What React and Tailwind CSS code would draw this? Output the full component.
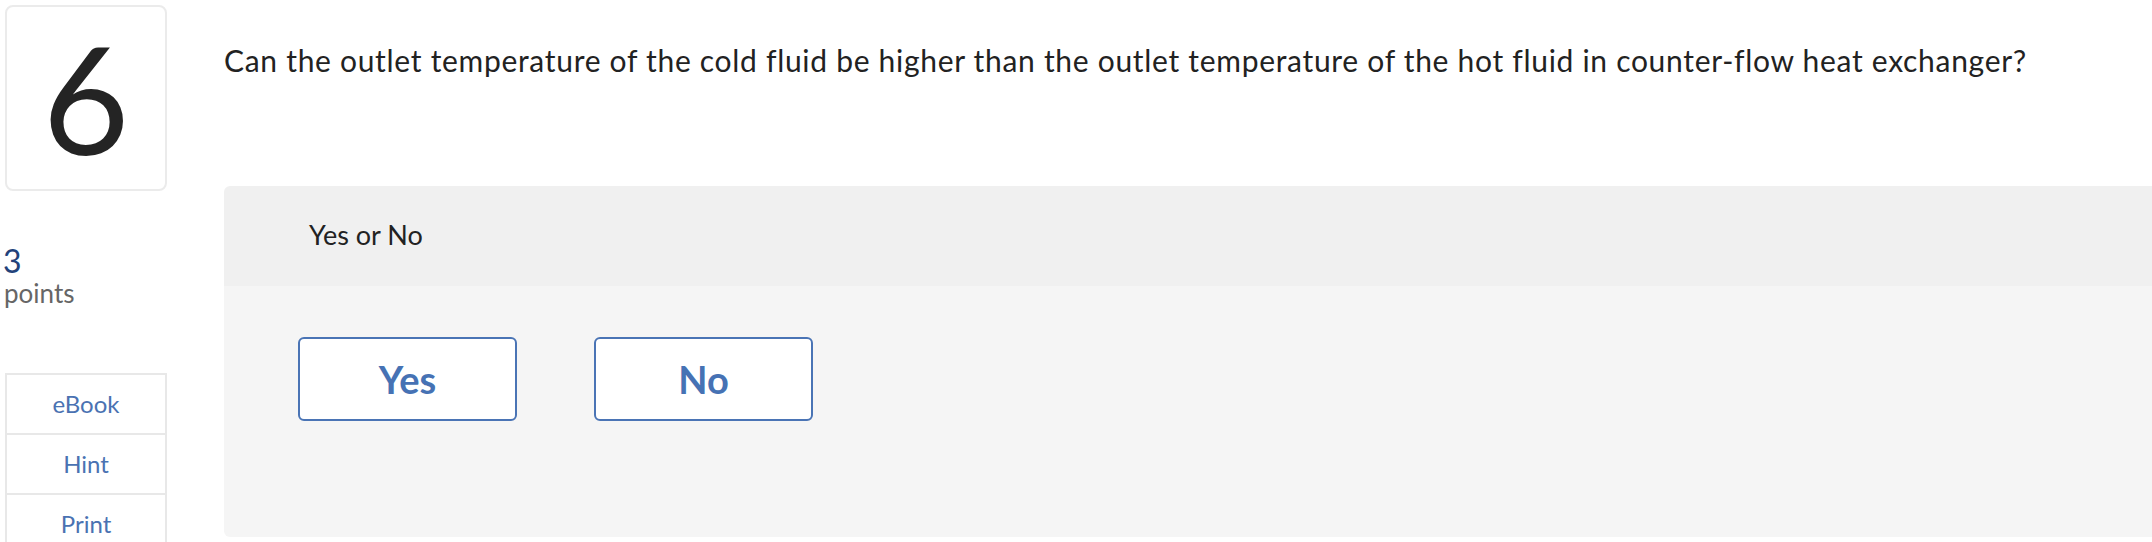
import React from "react";

const tools = ["eBook", "Hint", "Print"];

function App() {
  return (
    <div className="w-[2152px] h-[542px] overflow-hidden bg-white flex font-['Lato','Liberation_Sans',sans-serif]">
      {/* left column */}
      <div className="w-[214px] shrink-0 pl-[5px] pt-[5px]">
        <div className="w-[162px] h-[186px] border-2 border-[#ebebeb] rounded-[8px] flex items-center justify-center">
          <span className="text-[150px] leading-none text-[#242424] -mt-[2px]">6</span>
        </div>
        <div className="mt-[52px] -ml-[2px] text-[32px] leading-[36px] text-[#23427a]">3</div>
        <div className="-ml-[1px] text-[26px] leading-[28px] text-[#666666]">points</div>
        <div className="mt-[66px] w-[162px] border-2 border-[#e8e8e8] border-b-0">
          {tools.map((t) => (
            <div
              key={t}
              className="h-[60px] border-b-2 border-[#e8e8e8] flex items-center justify-center text-[24px] text-[#4a72b2]"
            >
              {t}
            </div>
          ))}
        </div>
      </div>

      {/* right column */}
      <div className="flex-1">
        <p className="mt-[42px] ml-[10px] text-[30px] leading-[36px] tracking-[0.7px] text-[#222222] whitespace-nowrap">
          Can the outlet temperature of the cold fluid be higher than the outlet temperature of the hot fluid in counter-flow heat exchanger?
        </p>
        <div className="mt-[108px] ml-[10px] mr-[-10px] rounded-[6px] overflow-hidden h-[351px] flex flex-col">
          <div className="h-[100px] bg-[#f0f0f0] flex items-center pl-[85px] pb-[2px]">
            <span className="text-[27px] text-[#222222]">Yes or No</span>
          </div>
          <div className="flex-1 bg-[#f5f5f5] pt-[51px] pl-[74px] flex gap-[77px] items-start">
            <button className="w-[219px] h-[84px] bg-white border-2 border-[#4a74b5] rounded-[6px] text-[38px] font-bold text-[#4672b4]">
              Yes
            </button>
            <button className="w-[219px] h-[84px] bg-white border-2 border-[#4a74b5] rounded-[6px] text-[38px] font-bold text-[#4672b4]">
              No
            </button>
          </div>
        </div>
      </div>
    </div>
  );
}

export default App;
